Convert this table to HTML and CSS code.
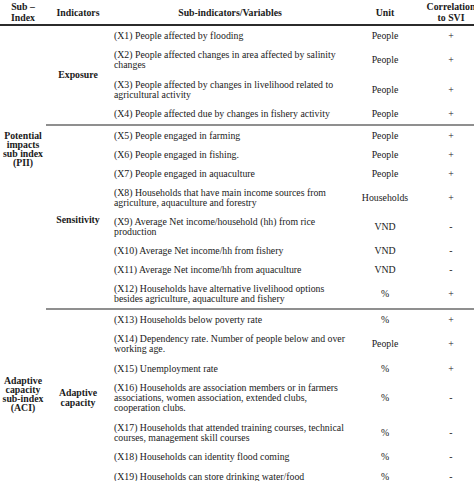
FILE: index.html
```html
<!DOCTYPE html>
<html lang="en">
<head>
<meta charset="utf-8">
<title>SVI indicators</title>
<link rel="stylesheet" href="styles.css">
</head>
<body>
<table class="svi">
  <colgroup>
    <col class="c-sub"><col class="c-ind"><col class="c-var"><col class="c-unit"><col class="c-cor">
  </colgroup>
  <thead>
    <tr>
      <th>Sub –<br>Index</th>
      <th>Indicators</th>
      <th>Sub-indicators/Variables</th>
      <th>Unit</th>
      <th>Correlation<br>to SVI</th>
    </tr>
  </thead>
  <tbody class="pii">
    <tr class="exp">
      <td rowspan="12" class="lbl lbl-pii">Potential<br>impacts<br>sub index<br>(PII)</td>
      <td rowspan="4" class="lbl lbl-exp">Exposure</td>
      <td class="var">(X1) People affected by flooding</td><td>People</td><td>+</td>
    </tr>
    <tr class="exp"><td class="var">(X2) People affected changes in area affected by salinity changes</td><td>People</td><td>+</td></tr>
    <tr class="exp"><td class="var">(X3) People affected by changes in livelihood related to agricultural activity</td><td>People</td><td>+</td></tr>
    <tr class="exp"><td class="var">(X4) People affected due by changes in fishery activity</td><td>People</td><td>+</td></tr>
    <tr class="group">
      <td rowspan="8" class="lbl lbl-sen">Sensitivity</td>
      <td class="var">(X5) People engaged in farming</td><td>People</td><td>+</td>
    </tr>
    <tr><td class="var">(X6) People engaged in fishing.</td><td>People</td><td>+</td></tr>
    <tr><td class="var">(X7) People engaged in aquaculture</td><td>People</td><td>+</td></tr>
    <tr><td class="var">(X8) Households that have main income sources from agriculture, aquaculture and forestry</td><td>Households</td><td>+</td></tr>
    <tr><td class="var">(X9) Average Net income/household (hh) from rice production</td><td>VND</td><td>-</td></tr>
    <tr><td class="var">(X10) Average Net income/hh from fishery</td><td>VND</td><td>-</td></tr>
    <tr><td class="var">(X11) Average Net income/hh from aquaculture</td><td>VND</td><td>-</td></tr>
    <tr><td class="var">(X12) Households have alternative livelihood options besides agriculture, aquaculture and fishery</td><td>%</td><td>+</td></tr>
  </tbody>
  <tbody class="aci">
    <tr class="group">
      <td rowspan="7" class="lbl lbl-aci">Adaptive<br>capacity<br>sub-index<br>(ACI)</td>
      <td rowspan="7" class="lbl lbl-ada">Adaptive<br>capacity</td>
      <td class="var">(X13) Households below poverty rate</td><td>%</td><td>+</td>
    </tr>
    <tr><td class="var">(X14) Dependency rate. Number of people below and over working age.</td><td>People</td><td>+</td></tr>
    <tr><td class="var">(X15) Unemployment rate</td><td>%</td><td>+</td></tr>
    <tr><td class="var">(X16) Households are association members or in farmers associations, women association, extended clubs, cooperation clubs.</td><td>%</td><td>-</td></tr>
    <tr><td class="var">(X17) Households that attended training courses, technical courses, management skill courses</td><td>%</td><td>-</td></tr>
    <tr><td class="var">(X18) Households can identity flood coming</td><td>%</td><td>-</td></tr>
    <tr><td class="var">(X19) Households can store drinking water/food</td><td>%</td><td>-</td></tr>
  </tbody>
</table>
</body>
</html>
```
FILE: styles.css
```css
html, body {
  margin: 0;
  padding: 0;
  background: #ffffff;
  overflow: hidden;
}

body {
  font-family: "Liberation Serif", "Times New Roman", serif;
  font-size: 9.8px;
  color: #1a1a1a;
}

.svi {
  border-collapse: separate;
  border-spacing: 0;
  table-layout: fixed;
  width: 482px;
}

.c-sub { width: 46px; }
.c-ind { width: 64px; }
.c-var { width: 240px; }
.c-unit { width: 70px; }
.c-cor { width: 62px; }

.svi th {
  font-weight: bold;
  line-height: 11px;
  padding: 1px 0;
  text-align: center;
  vertical-align: middle;
  border-bottom: 2px solid #2b2b2b;
}

.svi td {
  padding: 4.5px 0;
  line-height: 10px;
  text-align: center;
  vertical-align: middle;
}

.svi td.var {
  text-align: left;
  padding-left: 4px;
}

.svi tr.exp td {
  padding-top: 4.75px;
  padding-bottom: 4.75px;
}

.svi tbody.aci td {
  padding-top: 4.75px;
  padding-bottom: 4.75px;
}

.svi tr.group td {
  border-top: 2px solid #8f8f8f;
}

.lbl {
  font-weight: bold;
}

.svi tr td.lbl-pii {
  vertical-align: top;
  line-height: 9px;
  padding: 104.5px 0 0;
}

.svi tr td.lbl-exp {
  padding: 0;
}

.svi tr td.lbl-sen {
  padding: 6px 0 0;
}

.svi tr.group td.lbl-aci {
  border-top: none;
  vertical-align: top;
  line-height: 9px;
  padding: 68px 0 0;
}

.svi tr td.lbl-ada {
  vertical-align: top;
  line-height: 9.5px;
  padding: 78px 0 0;
}
```
